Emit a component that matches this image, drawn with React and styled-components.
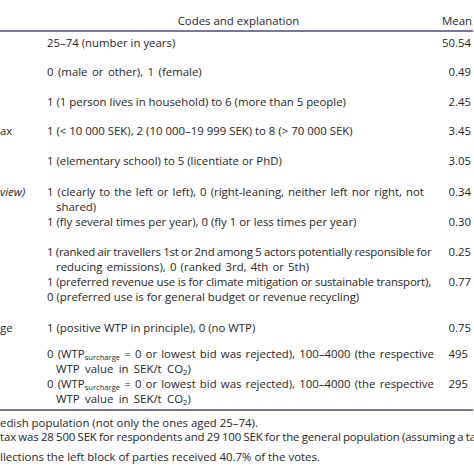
import React from 'react';
import styled, { createGlobalStyle } from 'styled-components';

const GlobalStyle = createGlobalStyle`
  html, body {
    margin: 0;
    padding: 0;
    background: #ffffff;
  }
  body {
    font-family: "Open Sans", "Noto Sans", sans-serif;
    color: #262626;
  }
`;

const Page = styled.div`
  width: 474px;
  height: 474px;
  overflow: hidden;
  padding-top: 13px;
  box-sizing: border-box;
  font-size: 11.4px;
  line-height: 15px;
`;

const Row = styled.div`
  display: grid;
  grid-template-columns: 47px minmax(0, 1fr) 44px;
  margin-top: ${props => props.$gap || 0}px;
  white-space: nowrap;
`;

const HeaderCell = styled.div`
  text-align: ${props => props.$align || 'left'};
  padding-right: ${props => props.$pr || 0}px;
`;

const Label = styled.div`
  font-style: ${props => (props.$italic ? 'italic' : 'normal')};
  overflow: hidden;
`;

const Codes = styled.div`
  padding-left: ${props => (props.$flat ? 0 : 9)}px;
  text-indent: ${props => (props.$flat ? 0 : -9)}px;
`;

const Line = styled.span`
  word-spacing: ${props => props.$ws || 0}px;
  letter-spacing: ${props => props.$ls || 0}px;
`;

const Mean = styled.div`
  text-align: right;
  padding-right: ${props => props.$pr || 3}px;
`;

const Rule = styled.div`
  height: 1.5px;
  background: #7676a2;
  margin-top: ${props => props.$gap || 0}px;
  margin-right: 1px;
`;

const Sub = styled.sub`
  font-size: 7.6px;
  line-height: 0;
  vertical-align: -2px;
  word-spacing: 0;
`;

const Notes = styled.div`
  margin-top: 5px;
  line-height: 14px;
  white-space: nowrap;
`;

const Note = styled.div`
  margin-top: ${props => props.$gap || 0}px;
  word-spacing: ${props => props.$ws || 0}px;
  letter-spacing: ${props => props.$ls || 0}px;
`;

const rows = [
  { gap: 3, codes: [{ text: '25–74 (number in years)' }], mean: '50.54' },
  { gap: 14.5, codes: [{ text: '0 (male or other), 1 (female)', ws: 1.5 }], mean: '0.49' },
  { gap: 14.5, codes: [{ text: '1 (1 person lives in household) to 6 (more than 5 people)' }], mean: '2.45' },
  {
    gap: 14.5,
    label: 'ax',
    codes: [{ text: '1 (< 10 000 SEK), 2 (10 000–19 999 SEK) to 8 (> 70 000 SEK)' }],
    mean: '3.45',
  },
  { gap: 14.5, codes: [{ text: '1 (elementary school) to 5 (licentiate or PhD)' }], mean: '3.05' },
  {
    gap: 16,
    label: 'view)',
    italic: true,
    codes: [
      { text: '1 (clearly to the left or left), 0 (right-leaning, neither left nor right, not', ws: 1.1 },
      { text: 'shared)' },
    ],
    mean: '0.34',
  },
  { gap: 0, codes: [{ text: '1 (fly several times per year), 0 (fly 1 or less times per year)' }], mean: '0.30' },
  {
    gap: 15,
    codes: [
      { text: '1 (ranked air travellers 1st or 2nd among 5 actors potentially responsible for', ls: -0.18, ws: -0.4 },
      { text: 'reducing emissions), 0 (ranked 3rd, 4th or 5th)', ws: 1.2 },
    ],
    mean: '0.25',
  },
  {
    gap: 0,
    flat: true,
    codes: [
      { text: '1 (preferred revenue use is for climate mitigation or sustainable transport),', ls: -0.17 },
      { text: '0 (preferred use is for general budget or revenue recycling)' },
    ],
    mean: '0.77',
  },
  { gap: 16.5, label: 'ge', codes: [{ text: '1 (positive WTP in principle), 0 (no WTP)' }], mean: '0.75' },
];

const wtpRows = [
  { gap: 11, mean: '495' },
  { gap: 0, mean: '295' },
];

function WtpCodes() {
  return (
    <Codes>
      <Line $ws={1.2}>
        0 (WTP<Sub>surcharge</Sub> = 0 or lowest bid was rejected), 100–4000 (the respective
      </Line>
      <br />
      <Line $ws={2.4}>
        WTP value in SEK/t CO<Sub>2</Sub>)
      </Line>
    </Codes>
  );
}

export default function App() {
  return (
    <>
      <GlobalStyle />
      <Page>
        <Row>
          <HeaderCell />
          <HeaderCell $align="center">Codes and explanation</HeaderCell>
          <HeaderCell $align="right" $pr={2}>Mean</HeaderCell>
        </Row>
        <Rule $gap={2} />

        {rows.map((row, i) => (
          <Row key={i} $gap={row.gap}>
            <Label $italic={row.italic}>{row.label}</Label>
            <Codes $flat={row.flat}>
              {row.codes.map((line, j) => (
                <React.Fragment key={j}>
                  {j > 0 && <br />}
                  <Line $ws={line.ws} $ls={line.ls}>{line.text}</Line>
                </React.Fragment>
              ))}
            </Codes>
            <Mean>{row.mean}</Mean>
          </Row>
        ))}

        {wtpRows.map((row, i) => (
          <Row key={'w' + i} $gap={row.gap}>
            <Label />
            <WtpCodes />
            <Mean $pr={6}>{row.mean}</Mean>
          </Row>
        ))}

        <Rule $gap={3} />

        <Notes>
          <Note>edish population (not only the ones aged 25–74).</Note>
          <Note $ls={-0.12} $ws={-0.5}>
            tax was 28 500 SEK for respondents and 29 100 SEK for the general population (assuming a ta
          </Note>
          <Note $gap={6}>llections the left block of parties received 40.7% of the votes.</Note>
        </Notes>
      </Page>
    </>
  );
}
